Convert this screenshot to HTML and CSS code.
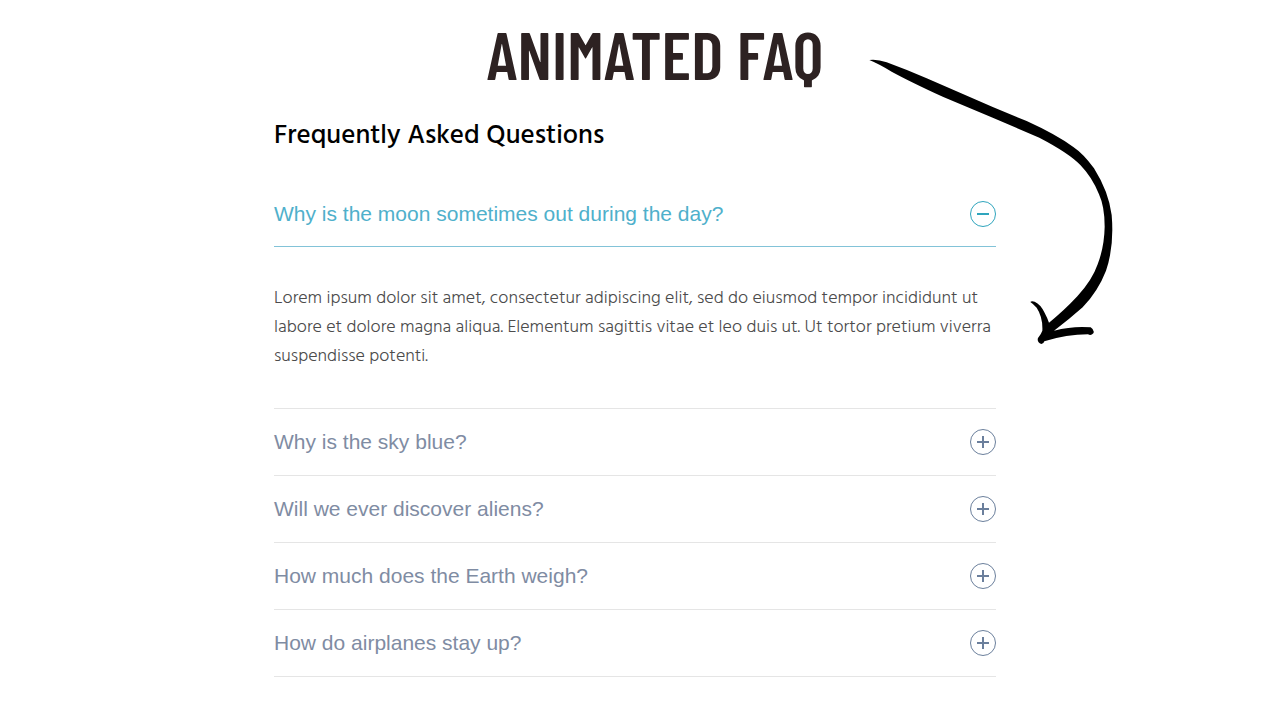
FILE: index.html
```html
<!DOCTYPE html>
<html lang="en">
<head>
    <meta charset="UTF-8">
    <meta name="viewport" content="width=device-width, initial-scale=1.0">
    <title>Animated FAQ</title>
    <link rel="stylesheet" href="styles.css">
</head>
<body>
    <div class="container">
        <h1 class="title">ANIMATED FAQ</h1>
        <svg class="arrow" viewBox="0 0 810 960" aria-hidden="true">
            <path d="M28 60 Q52 57 80 67 Q140 89 200 115 L400 202 L500 243 Q590 284 640 321 Q670 341 702 385 Q746 455 755 525 Q763 620 738 692 Q715 752 668 802 Q630 836 582 872 Q640 857 692 862 Q705 871 700 880 Q693 888 684 883 Q620 883 553 904 Q551 912 544 912 Q530 906 534 894 Q543 883 547 872 Q549 832 530 803 Q520 792 511 786 Q514 782 524 785 Q542 793 553 817 Q562 834 567 848 Q610 814 652 769 Q697 720 713 673 Q733 620 734 560 Q734 500 717 463 Q697 412 661 375 Q628 340 538 293 L400 234 L250 171 Q150 125 95 95 Q55 71 28 60 Z"/>
        </svg>
        <h2 class="heading">Frequently Asked Questions</h2>
        <div class="accordion">
            <div class="accordion-item">
                <button id="faq-1" aria-expanded="true" aria-controls="answer-1">Why is the moon sometimes out during the day?<span class="icon"></span></button>
                <div class="content" id="answer-1">
                    <p>Lorem ipsum dolor sit amet, consectetur adipiscing elit, sed do eiusmod tempor incididunt ut labore et dolore magna aliqua. Elementum sagittis vitae et leo duis ut. Ut tortor pretium viverra suspendisse potenti.</p>
                </div>
            </div>
            <div class="accordion-item">
                <button id="faq-2" aria-expanded="false">Why is the sky blue?<span class="icon"></span></button>
            </div>
            <div class="accordion-item">
                <button id="faq-3" aria-expanded="false">Will we ever discover aliens?<span class="icon"></span></button>
            </div>
            <div class="accordion-item">
                <button id="faq-4" aria-expanded="false">How much does the Earth weigh?<span class="icon"></span></button>
            </div>
            <div class="accordion-item">
                <button id="faq-5" aria-expanded="false">How do airplanes stay up?<span class="icon"></span></button>
            </div>
        </div>
    </div>
    <script>
        var items = document.querySelectorAll(".accordion button");

        function toggleAccordion() {
            var expanded = this.getAttribute("aria-expanded") === "true";
            for (var i = 0; i < items.length; i++) {
                items[i].setAttribute("aria-expanded", "false");
            }
            if (!expanded) {
                this.setAttribute("aria-expanded", "true");
            }
        }

        items.forEach(function(item) {
            item.addEventListener("click", toggleAccordion);
        });
    </script>
</body>
</html>
```
FILE: styles.css
```css
* {
    box-sizing: border-box;
}
body {
    margin: 0;
    padding: 0 10px 0 0;
    background-color: #fff;
    font-family: "Hind", "Open Sans", "Noto Sans", sans-serif;
}
.container {
    position: relative;
    max-width: 722px;
    margin: 0 auto;
    padding-top: 13px;
}
.title {
    margin: 0;
    padding-left: 40px;
    font-family: "Barlow Condensed", "Roboto Condensed", "Liberation Sans Narrow", sans-serif;
    font-size: 68px;
    font-weight: 600;
    line-height: 80px;
    text-align: center;
    color: #2d2222;
}
.arrow {
    position: absolute;
    top: 40px;
    left: 586px;
    width: 270px;
    height: 320px;
    pointer-events: none;
}
.heading {
    margin: 22px 0;
    font-size: 27px;
    font-weight: 500;
    line-height: 44px;
    color: #000;
}
.accordion-item {
    border-bottom: 1px solid #e5e5e5;
}
.accordion button {
    display: flex;
    align-items: center;
    justify-content: space-between;
    width: 100%;
    height: 66px;
    padding: 0;
    border: none;
    background: none;
    color: #7f8ca3;
    font-family: Arial, "Liberation Sans", sans-serif;
    font-size: 21px;
    text-align: left;
    cursor: pointer;
}
.accordion button:hover,
.accordion button[aria-expanded="true"] {
    color: #4fb0cb;
}
.accordion button[aria-expanded="true"] {
    border-bottom: 1px solid #82c3d8;
}
.icon {
    display: grid;
    place-items: center;
    width: 26px;
    height: 26px;
    border: 1px solid currentColor;
    border-radius: 50%;
    color: #6b7f9c;
}
button[aria-expanded="true"] .icon {
    color: #2fa5bd;
}
.icon::before,
.icon::after {
    content: "";
    grid-area: 1 / 1;
    background: currentColor;
}
.icon::before {
    width: 12px;
    height: 2px;
}
.icon::after {
    width: 2px;
    height: 12px;
}
button[aria-expanded="true"] .icon::after {
    display: none;
}
.content {
    display: none;
}
button[aria-expanded="true"] + .content {
    display: block;
}
.content p {
    margin: 0;
    padding: 37px 0;
    font-size: 18px;
    font-weight: 300;
    line-height: 29px;
    color: #4c4c4c;
}
```
